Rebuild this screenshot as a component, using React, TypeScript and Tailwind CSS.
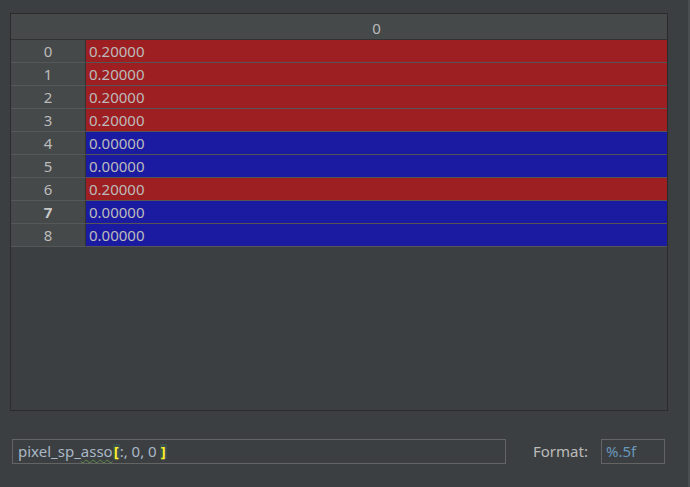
const rows = [
  { i: 0, v: 0.2 },
  { i: 1, v: 0.2 },
  { i: 2, v: 0.2 },
  { i: 3, v: 0.2 },
  { i: 4, v: 0 },
  { i: 5, v: 0 },
  { i: 6, v: 0.2 },
  { i: 7, v: 0 },
  { i: 8, v: 0 },
];

export default function App() {
  return (
    <div
      className="w-[690px] h-[487px] bg-[#3c3f41] border-r-2 border-[#4b4e50] flex flex-col text-[#bbbbbb]"
      style={{ fontFamily: '"Noto Sans", "Open Sans", sans-serif' }}
    >
      {/* table frame */}
      <div className="ml-[10px] mt-[13px] w-[658px] h-[398px] border border-[#2b2b2b] flex flex-col bg-[#3c3f41]">
        <div className="flex h-[26px] bg-[#45494a] border-b border-[#323232]">
          <div className="w-[75px]" />
          <div className="flex-1 flex items-center justify-center text-[15px] leading-none pt-[3px]">0</div>
        </div>
        {rows.map((r) => (
          <div key={r.i} className="flex h-[23px]">
            <div
              className={`w-[75px] bg-[#45494a] border-r border-b border-r-[#323232] border-b-[#555858] flex items-center justify-center text-[15px] leading-none ${
                r.i === 7 ? "font-bold text-[#c8c8c8]" : ""
              }`}
            >
              {r.i}
            </div>
            <div
              className={`flex-1 border-b border-[#555555] flex items-center pl-[3px] text-[15px] leading-none ${
                r.v > 0 ? "bg-[#9e1f21]" : "bg-[#1b1ba1]"
              }`}
            >
              {r.v.toFixed(5)}
            </div>
          </div>
        ))}
      </div>

      {/* bottom bar */}
      <div className="flex items-center mt-[28px] ml-[12px]">
        <div className="w-[494px] h-[25px] border border-[#646464] flex items-center pl-[5px] text-[15px] leading-none text-[#a9b7c6]">
          <span>pixel_sp_</span>
          <span className="underline decoration-wavy decoration-[#5f8c4a] decoration-1 underline-offset-2">asso</span>
          <span className="bg-[#3b514d] text-[#ffef28] font-bold px-[1px]">[</span>
          <span>:, 0, 0</span>
          <span className="bg-[#3b514d] text-[#ffef28] font-bold px-[1px] ml-[3px]">]</span>
        </div>
        <div className="ml-[27px] text-[15px] leading-none">Format:</div>
        <div className="ml-[13px] w-[64px] h-[25px] border border-[#646464] flex items-center pl-[4px] text-[15px] leading-none text-[#6897bb]">
          %.5f
        </div>
      </div>
    </div>
  );
}
